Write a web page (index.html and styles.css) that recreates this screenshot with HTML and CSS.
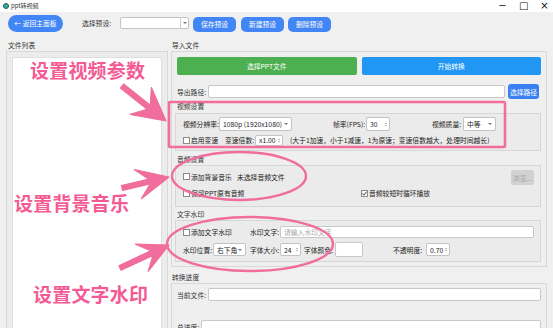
FILE: index.html
```html
<!DOCTYPE html>
<html lang="zh">
<head>
<meta charset="utf-8">
<title>ppt转视频</title>
<link rel="stylesheet" href="styles.css">
</head>
<body>
<div class="titlebar">
  <span class="app-icon"></span><span class="app-title">ppt转视频</span>
  <span class="win-ctrls"><span class="wc">−</span><span class="wc">□</span><span class="wc">×</span></span>
</div>

<div class="toolbar">
  <button class="btn btn-back">← 返回主面板</button>
  <span class="lbl lbl-preset">选择预设:</span>
  <div class="combo combo-preset"><span class="combo-text"></span><span class="combo-drop"><span class="caret"></span></span></div>
  <button class="btn btn-tool btn-save">保存预设</button>
  <button class="btn btn-tool btn-new">新建预设</button>
  <button class="btn btn-tool btn-del">删除预设</button>
</div>

<div class="main">
  <div class="col-left">
    <div class="sec-title">文件列表</div>
    <div class="frame frame-left"><div class="file-list"></div></div>
  </div>

  <div class="col-right">
    <div class="sec-title">导入文件</div>
    <div class="frame frame-import">
      <div class="big-row">
        <button class="btn btn-big btn-green">选择PPT文件</button>
        <button class="btn btn-big btn-start">开始转换</button>
      </div>
      <div class="row row-export">
        <span class="lbl lbl-export">导出路径:</span>
        <div class="input input-export"></div>
        <button class="btn btn-path">选择路径</button>
      </div>

      <div class="group-title">视频设置</div>
      <div class="group group-video">
        <div class="row row-v1">
          <span class="lbl w-res">视频分辨率:</span>
          <div class="combo combo-res"><span class="combo-text">1080p (1920x1080)</span><span class="caret"></span></div>
          <span class="lbl w-fps">帧率(FPS):</span>
          <div class="spin spin-fps"><span class="spin-text">30</span><span class="spin-arrows"><span class="up"></span><span class="down"></span></span></div>
          <span class="lbl w-qual">视频质量:</span>
          <div class="combo combo-qual"><span class="combo-text">中等</span><span class="caret"></span></div>
        </div>
        <div class="row row-v2">
          <span class="check"></span><span class="lbl w-speed">启用变速</span>
          <span class="lbl w-mult">变速倍数:</span>
          <div class="spin spin-mult"><span class="spin-text">x1.00</span><span class="spin-arrows"><span class="up"></span><span class="down"></span></span></div>
          <span class="lbl hint">(大于1加速，小于1减速，1为原速；变速倍数越大，处理时间越长)</span>
        </div>
      </div>

      <div class="group-title gt-audio">音频设置</div>
      <div class="group group-audio">
        <div class="row row-a1">
          <span class="check"></span><span class="lbl w-bgm">添加背景音乐</span>
          <span class="lbl">未选择音频文件</span>
          <button class="btn btn-browse">浏览...</button>
        </div>
        <div class="row row-a2">
          <div class="cell-keep"><span class="check"></span><span class="lbl">保留PPT原有音频</span></div>
          <span class="check checked"><svg width="7" height="7" viewBox="0 0 7 7"><path d="M1.4 3.6l1.4 1.5 2.8-3.4" fill="none" stroke="#222" stroke-width="0.9"/></svg></span><span class="lbl">音频较短时循环播放</span>
        </div>
      </div>

      <div class="group-title gt-wm">文字水印</div>
      <div class="group group-wm">
        <div class="row row-w1">
          <div class="cell-wm"><span class="check"></span><span class="lbl">添加文字水印</span></div>
          <span class="lbl w-wmtext">水印文字:</span>
          <div class="input input-wm"><span class="placeholder">请输入水印文字</span></div>
        </div>
        <div class="row row-w2">
          <span class="lbl w-pos">水印位置:</span>
          <div class="combo combo-pos"><span class="combo-text">右下角</span><span class="caret"></span></div>
          <span class="lbl w-size">字体大小:</span>
          <div class="spin spin-size"><span class="spin-text">24</span><span class="spin-arrows"><span class="up"></span><span class="down"></span></span></div>
          <span class="lbl w-color">字体颜色:</span>
          <div class="color-box"></div>
          <span class="lbl w-opa">不透明度:</span>
          <div class="spin spin-opa"><span class="spin-text">0.70</span><span class="spin-arrows"><span class="up"></span><span class="down"></span></span></div>
        </div>
      </div>
    </div>

    <div class="sec-title st-progress">转换进度</div>
    <div class="frame frame-progress">
      <div class="row row-p1">
        <span class="lbl w-cur">当前文件:</span>
        <div class="input input-prog"></div>
      </div>
      <div class="row row-p2">
        <span class="lbl w-total">总进度:</span>
        <div class="input input-prog"></div>
      </div>
    </div>
  </div>
</div>

<svg class="annot" width="553" height="328" viewBox="0 0 553 328">
  <rect x="169" y="102" width="336" height="45" rx="1" fill="none" stroke="#f06d9c" stroke-width="2.6"/>
  <ellipse cx="239" cy="176" rx="67" ry="24" fill="none" stroke="#f06d9c" stroke-width="2.4"/>
  <ellipse cx="250" cy="244" rx="83" ry="27" fill="none" stroke="#f06d9c" stroke-width="2.4"/>
  <polygon points="123.6,84 150.3,105.3 151.4,87.6 166,121 130.2,114.4 147.1,109.2 120.4,88" fill="#f06d9c" stroke="#f06d9c" stroke-width="1.2" stroke-linejoin="round"/>
  <polygon points="121.4,185.6 148.9,179.2 134.5,169.7 169,177 141.3,198.9 150.1,184 122.6,190.4" fill="#f06d9c" stroke="#f06d9c" stroke-width="1.2" stroke-linejoin="round"/>
  <polygon points="118.9,265.7 150.7,250.8 135.4,244.2 169,245 148.2,271.4 152.9,255.4 121.1,270.3" fill="#f06d9c" stroke="#f06d9c" stroke-width="1.2" stroke-linejoin="round"/>
</svg>
<div class="note note-video">设置视频参数</div>
<div class="note note-audio">设置背景音乐</div>
<div class="note note-wm">设置文字水印</div>
</body>
</html>
```

FILE: styles.css
```css
* { box-sizing: border-box; }
html, body { margin: 0; padding: 0; }
body {
  width: 553px;
  height: 328px;
  overflow: hidden;
  position: relative;
  background: #f0f0f0;
  font-family: "Noto Sans CJK SC", "Microsoft YaHei", sans-serif;
  font-size: 6.8px;
  color: #222;
}
button { font-family: inherit; font-size: 6.8px; border: none; padding: 0; cursor: default; }

/* title bar */
.titlebar {
  height: 12px;
  background: #fff;
  display: flex;
  align-items: center;
  padding-left: 3px;
  padding-right: 4px;
}
.app-icon {
  width: 6px; height: 6px; border-radius: 50%;
  background: #31b0a0; border: 1px solid #1f5e58;
}
.app-title { margin-left: 2px; font-size: 6px; line-height: 12px; color: #333; }
.win-ctrls {
  margin-left: auto;
  display: flex;
  align-items: center;
  gap: 12px;
  font-family: "DejaVu Sans", sans-serif;
  font-size: 10px;
  line-height: 12px;
  color: #111;
}
.wc { display: block; width: 9px; text-align: center; }

/* toolbar */
.toolbar {
  height: 28px;
  display: flex;
  align-items: center;
  padding: 0 5px 6px 8px;
}
.btn { color: #fff; display: flex; align-items: center; justify-content: center; }
.btn-back {
  width: 55px; height: 17px; border-radius: 9px;
  background: #4285f4;
}
.lbl { white-space: nowrap; line-height: 10px; }
.lbl-preset { margin-left: 19px; width: 38px; color: #333; }
.combo {
  background: #fff; border: 1px solid #c3c3c3; border-radius: 2px;
  display: flex; align-items: center; padding-left: 3px; padding-right: 3px;
}
.combo-text { flex: 1; white-space: nowrap; line-height: 10px; }
.caret {
  width: 0; height: 0;
  border-left: 2px solid transparent; border-right: 2px solid transparent;
  border-top: 2px solid #777;
}
.combo-preset { width: 69px; height: 12px; padding-right: 0; }
.combo-drop {
  width: 8px; height: 100%; border-left: 1px solid #d0d0d0;
  display: flex; align-items: center; justify-content: center;
}
.btn-tool { width: 43px; height: 15px; border-radius: 5px; background: #4285f4; margin-top: 2px; }
.btn-save { margin-left: 4px; }
.btn-new { margin-left: 5px; }
.btn-del { margin-left: 4px; }

/* main */
.main { display: flex; gap: 3px; padding: 0 6px; }
.col-left { width: 162px; }
.col-right { width: 376px; }
.sec-title { height: 11px; line-height: 11px; padding-left: 2px; color: #333; }
.col-right .sec-title { padding-left: 1px; }
.frame { border: 1px solid #d8d8d8; background: #efefef; }
.frame-left { height: 290px; padding: 5px; background: #ececec; }
.file-list { height: 100%; background: #fff; border: 1px solid #dedede; }

.frame-import { padding: 5px 5px 4px 5px; }
.big-row { display: flex; gap: 5px; height: 18px; }
.btn-big { flex: 1; height: 18px; border-radius: 2px; }
.btn-green { background: #4caf50; }
.btn-start { background: #2196f3; }

.row { display: flex; align-items: center; }
.row-export { margin-top: 9px; height: 15px; }
.lbl-export { width: 31px; color: #333; }
.input { background: #fff; border: 1px solid #c8c8c8; border-radius: 2px; height: 13px; display: flex; align-items: center; padding-left: 3px; }
.input-export { flex: 1; }
.btn-path { width: 31px; height: 15px; margin-left: 3px; margin-right: 2px; border-radius: 3px; background: #3b80f0; }

.group-title { height: 11px; line-height: 11px; margin-top: 2px; color: #333; }
.gt-audio { margin-top: 3px; }
.gt-wm { margin-top: 2px; }
.group {
  margin-left: -2px;
  border: 1px solid #d6d6d6;
  background: #ebebeb;
  padding: 0 6px 0 7px;
}
.group-video { margin-top: 1px; height: 38px; padding-top: 3px; }
.row-v1 { height: 14px; }
.w-res { width: 36px; }
.combo-res { width: 73px; height: 14px; }
.w-fps { width: 33px; margin-left: 41px; }
.spin {
  background: #fff; border: 1px solid #c3c3c3; border-radius: 2px;
  display: flex; align-items: center; padding-left: 3px; padding-right: 2px;
}
.spin-text { flex: 1; line-height: 10px; white-space: nowrap; }
.spin-arrows { display: flex; flex-direction: column; gap: 1px; }
.spin-arrows .up {
  width: 0; height: 0;
  border-left: 1.5px solid transparent; border-right: 1.5px solid transparent;
  border-bottom: 1.5px solid #777;
}
.spin-arrows .down {
  width: 0; height: 0;
  border-left: 1.5px solid transparent; border-right: 1.5px solid transparent;
  border-top: 1.5px solid #777;
}
.spin-fps { width: 24px; height: 14px; }
.w-qual { width: 31px; margin-left: 42px; }
.combo-qual { width: 33px; height: 14px; }

.row-v2 { height: 12px; margin-top: 3px; }
.check {
  width: 7px; height: 7px; background: #fff; border: 1px solid #8a8a8a;
  margin-right: 1px; flex: none; display: block;
}
.check svg { display: block; margin: -1px 0 0 -1px; }
.w-speed { width: 34px; }
.w-mult { width: 30px; }
.spin-mult { width: 28px; height: 11px; }
.hint { margin-left: 7px; }

.group-audio { height: 42px; padding-top: 4px; }
.row-a1 { height: 13px; }
.w-bgm { width: 46px; }
.btn-browse {
  margin-left: auto; width: 23px; height: 15px; margin-top: 2px;
  background: #d2d2d2; color: #a2a2a2; border-radius: 2px;
}
.row-a2 { height: 12px; margin-top: 4px; }
.cell-keep { width: 178px; display: flex; align-items: center; }

.group-wm { height: 42px; padding-top: 5px; }
.row-w1 { height: 12px; }
.cell-wm { width: 67px; display: flex; align-items: center; }
.w-wmtext { width: 30px; }
.input-wm { flex: 1; height: 12px; }
.placeholder { color: #a8a8a8; line-height: 10px; white-space: nowrap; }
.row-w2 { height: 15px; margin-top: 4px; }
.w-pos { width: 30px; }
.combo-pos { width: 33px; height: 13px; margin-left: 0; }
.w-size { width: 30px; margin-left: 4px; }
.spin-size { width: 21px; height: 13px; }
.w-color { width: 31px; margin-left: 3px; }
.color-box { width: 28px; height: 15px; background: #fff; border: 1px solid #c8c8c8; border-radius: 2px; }
.w-opa { width: 33px; margin-left: 30px; }
.spin-opa { width: 24px; height: 13px; }

.st-progress { margin-top: 5px; }
.frame-progress { height: 60px; padding: 4px 5px; }
.row-p1 { height: 13px; }
.row-p2 { height: 13px; margin-top: 19px; }
.w-cur { width: 31px; color: #333; }
.w-total { width: 24px; color: #333; }
.input-prog { flex: 1; }

/* annotations */
.annot { position: absolute; left: 0; top: 0; pointer-events: none; }
.note {
  position: absolute;
  font-size: 19px;
  font-weight: 700;
  line-height: 19px;
  color: #f45a93;
  white-space: nowrap;
  letter-spacing: 0.2px;
}
.note-video { left: 30px; top: 60px; }
.note-audio { left: 14px; top: 193px; }
.note-wm { left: 33px; top: 284px; }
```
